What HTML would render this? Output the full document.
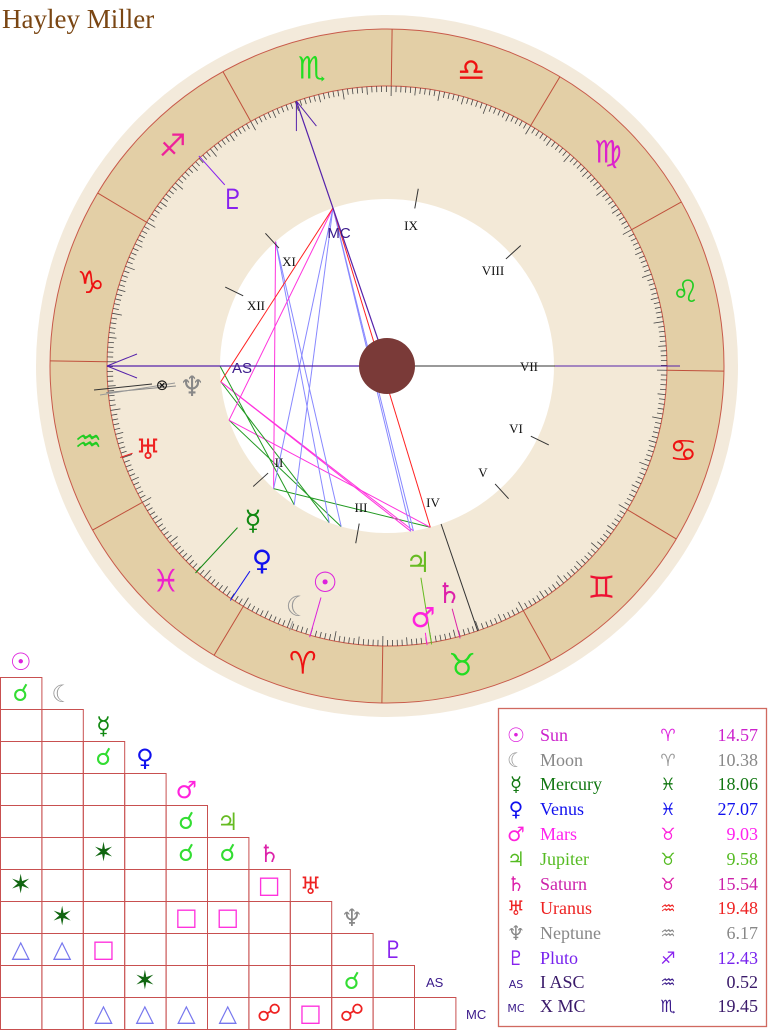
<!DOCTYPE html>
<html><head><meta charset="utf-8"><style>
html,body{margin:0;padding:0;background:#fff;width:774px;height:1032px;overflow:hidden}
svg{display:block}
</style></head><body>
<svg id="s" width="774" height="1032" viewBox="0 0 774 1032" xmlns="http://www.w3.org/2000/svg" font-family="DejaVu Sans, sans-serif">
<text x="2" y="28" font-family="Liberation Serif, serif" font-size="27" fill="#7a4613">Hayley Miller</text>
<circle cx="387" cy="366" r="351" fill="#f3eadb"/>
<circle cx="387" cy="366" r="337" fill="#e3cfa6" stroke="#c85a4a" stroke-width="1"/>
<circle cx="387" cy="366" r="280" fill="#f3e9d7" stroke="#c85a4a" stroke-width="1"/>
<circle cx="387" cy="366" r="167" fill="#ffffff"/>
<g id="g"></g>
<circle cx="387" cy="366" r="28" fill="#7a3a38"/>
<g id="top"></g>
<rect x="498.5" y="708.5" width="268" height="318" fill="#fff" stroke="#d06a60" stroke-width="1.3"/>
<g font-family="Liberation Serif, serif" font-size="18">
<g font-family="DejaVu Sans, sans-serif" font-size="20" text-anchor="middle">
<text x="516" y="742" fill="#dd22dd">☉</text><text x="516" y="767" fill="#999">☾</text><text x="516" y="791" fill="#117711">☿</text><text x="516" y="816" fill="#1111ee">♀</text><text x="516" y="841" fill="#ff22dd">♂</text><text x="516" y="866" fill="#55bb22">♃</text><text x="516" y="891" fill="#dd22aa">♄</text><text x="516" y="915" fill="#ee2222">♅</text><text x="516" y="940" fill="#888">♆</text><text x="516" y="965" fill="#8822ee">♇</text>
<text x="516" y="988" fill="#3a1a8a" font-size="11">AS</text><text x="516" y="1012" fill="#3a1a8a" font-size="11">MC</text>
<text x="668" y="741" fill="#dd22dd" font-size="17">♈</text><text x="668" y="766" fill="#999" font-size="17">♈</text><text x="668" y="790" fill="#117711" font-size="17">♓</text><text x="668" y="815" fill="#1111ee" font-size="17">♓</text><text x="668" y="840" fill="#ff22dd" font-size="17">♉</text><text x="668" y="865" fill="#55bb22" font-size="17">♉</text><text x="668" y="890" fill="#dd22aa" font-size="17">♉</text><text x="668" y="914" fill="#ee2222" font-size="17">♒</text><text x="668" y="939" fill="#888" font-size="17">♒</text><text x="668" y="964" fill="#8822ee" font-size="17">♐</text><text x="668" y="988" fill="#3a1a8a" font-size="17">♒</text><text x="668" y="1012" fill="#3a1a8a" font-size="17">♏</text>
</g>
<text x="540" y="741" fill="#cc22cc">Sun</text><text x="540" y="766" fill="#888">Moon</text><text x="540" y="790" fill="#117711">Mercury</text><text x="540" y="815" fill="#1111ee">Venus</text><text x="540" y="840" fill="#ff22ee">Mars</text><text x="540" y="865" fill="#55bb22">Jupiter</text><text x="540" y="890" fill="#cc22aa">Saturn</text><text x="540" y="914" fill="#ee2222">Uranus</text><text x="540" y="939" fill="#888">Neptune</text><text x="540" y="964" fill="#7722ee">Pluto</text><text x="540" y="988" fill="#3a1a6a">I ASC</text><text x="540" y="1012" fill="#3a1a6a">X MC</text>
<g text-anchor="end">
<text x="758" y="741" fill="#cc22cc">14.57</text><text x="758" y="766" fill="#888">10.38</text><text x="758" y="790" fill="#117711">18.06</text><text x="758" y="815" fill="#1111ee">27.07</text><text x="758" y="840" fill="#ff22ee">9.03</text><text x="758" y="865" fill="#55bb22">9.58</text><text x="758" y="890" fill="#cc22aa">15.54</text><text x="758" y="914" fill="#ee2222">19.48</text><text x="758" y="939" fill="#888">6.17</text><text x="758" y="964" fill="#7722ee">12.43</text><text x="758" y="988" fill="#3a1a6a">0.52</text><text x="758" y="1012" fill="#3a1a6a">19.45</text>
</g></g>
<g id="grid"></g>
</svg>
<script>
var NS="http://www.w3.org/2000/svg",cx=387,cy=366,A=300.87;
function el(p,t,a,txt){var e=document.createElementNS(NS,t);for(var k in a)e.setAttribute(k,a[k]);if(txt!=null)e.textContent=txt;p.appendChild(e);return e;}
function pt(l,r){var th=(180+(l-A))*Math.PI/180;return [cx+r*Math.cos(th),cy-r*Math.sin(th)];}
function pa(th,r){th=th*Math.PI/180;return [cx+r*Math.cos(th),cy-r*Math.sin(th)];}
var g=document.getElementById('g'),top_=document.getElementById('top');
function line(p,a,b,c,w){el(p,'line',{x1:a[0],y1:a[1],x2:b[0],y2:b[1],stroke:c,'stroke-width':w||1});}
for(var d=0;d<360;d++){var L=d%10==0?10:(d%5==0?8:6);line(g,pt(d,280),pt(d,280-L),'#444',0.8);}
for(var k=0;k<12;k++)line(g,pt(30*k,280),pt(30*k,337),'#c0503c',1);
var sg="♈♉♊♋♌♍♎♏♐♑♒♓",sc=['#ee1111','#22dd22','#ee1133','#ee1111','#22cc22','#dd22cc','#ee1111','#22dd22','#ee2299','#ee1111','#22cc22','#ee22cc'];
for(k=0;k<12;k++){var p=pt(30*k+15,308);el(g,'text',{x:p[0],y:p[1]+11,'text-anchor':'middle','font-size':31,fill:sc[k]},sg[k]);}
var lon=[14.95,10.63,348.1,357.12,39.05,39.97,45.9,319.8,306.28,252.72,300.87,229.75];
var pc=['#dd22dd','#999999','#118811','#1111ee','#ff22dd','#66bb22','#dd22aa','#ee2222','#888888','#8822ee','#3a1a8a','#3a1a8a'];
var gl=['☉','☾','☿','♀','♂','♃','♄','♅','♆','♇'];
var pos=[[325,582],[298,606],[253,520],[262,560],[423,617],[418,562],[449,593],[148,449],[192,386],[233,199]];
for(var i=0;i<10;i++){var a=pt(lon[i],282),dx=pos[i][0]-cx,dy=pos[i][1]-cy,r=Math.sqrt(dx*dx+dy*dy);
line(g,a,pt(lon[i],r+16),pc[i],1);el(top_,'text',{x:pos[i][0],y:pos[i][1]+10,'text-anchor':'middle','font-size':28,fill:pc[i]},gl[i]);}
var asp=[[6,2,'#229922'],[7,0,'#229922'],[7,6,'#ff33dd'],[8,1,'#229922'],[8,4,'#ff33dd'],[8,5,'#ff33dd'],[9,0,'#8888ff'],[9,1,'#8888ff'],[9,2,'#ff33dd'],[10,3,'#229922'],[11,2,'#8888ff'],[11,3,'#8888ff'],[11,4,'#8888ff'],[11,5,'#8888ff'],[11,6,'#ff2222'],[11,7,'#ff33dd'],[11,8,'#ff2222']];
asp.forEach(function(q){line(g,pt(lon[q[0]],167),pt(lon[q[1]],167),q[2],1);});
line(g,[cx,cy],pt(A,280),'#5522aa',1.2);
var as=pt(A,280);line(g,as,[as[0]+30,as[1]-12],'#5522aa',1);line(g,as,[as[0]+30,as[1]+12],'#5522aa',1);
line(g,[cx,cy],pt(229.75,280),'#5522aa',1.2);var mc=pt(229.75,280);
line(g,mc,[mc[0],mc[1]+30],'#5522aa',1);line(g,mc,[mc[0]+20,mc[1]+25],'#5522aa',1);
line(g,[cx,cy],[680,366],'#5522aa',1);line(g,[380,366],[555,366],'#333',1);
line(g,pa(288.9,167),pa(288.9,280),'#333',1);
var hs=[[80,'IX',411,230],[42,'VIII',493,275],[132.5,'XI',289,266],[154,'XII',256,310],[222,'II',279,467],[260,'III',361,512],[312.5,'V',483,477],[334,'VI',516,433]];
hs.forEach(function(h){line(g,pa(h[0],160),pa(h[0],180),'#333',1);el(top_,'text',{x:h[2],y:h[3],'text-anchor':'middle','font-size':13,'font-family':'Liberation Serif, serif',fill:'#111'},h[1]);});
el(top_,'text',{x:433,y:507,'text-anchor':'middle','font-size':13,'font-family':'Liberation Serif, serif',fill:'#111'},'IV');
el(top_,'text',{x:529,y:371,'text-anchor':'middle','font-size':13,'font-family':'Liberation Serif, serif',fill:'#111'},'VII');
el(top_,'text',{x:242,y:373,'text-anchor':'middle','font-size':15,'font-family':'Liberation Sans, sans-serif',fill:'#3a1a8a'},'AS');
el(top_,'text',{x:339,y:238,'text-anchor':'middle','font-size':15,'font-family':'Liberation Sans, sans-serif',fill:'#3a1a8a'},'MC');
line(g,[94,390],[152,384],'#333',1);line(g,[100,395],[175,383],'#999',1);
el(top_,'text',{x:162,y:390,'text-anchor':'middle','font-size':15,fill:'#111'},'⊗');
var G=document.getElementById('grid'),cw=41.4,ch=32,y0=677;
var ag={c:['☌','#33dd33'],s:['✶','#116611'],q:['□','#ff33dd'],t:['△','#7777ee'],o:['☍','#ee2222']};
var rows=[['c'],[],[,,'c'],[],[,,,,'c'],[,,'s',,'c','c'],['s',,,,,,'q'],[,'s',,,'q','q'],['t','t','q'],[,,,'s',,,,,'c'],[,,'t','t','t','t','o','q','o']];
for(var r=0;r<11;r++){for(var c=0;c<=r;c++){var x=c*cw,y=y0+r*ch;
el(G,'rect',{x:x+0.5,y:y+0.5,width:cw,height:ch,fill:'none',stroke:'#c85050','stroke-width':1});
var s=rows[r][c];if(s)el(G,'text',{x:x+cw/2,y:y+24,'text-anchor':'middle','font-size':s=='s'?26:24,fill:ag[s][1]},ag[s][0]);}}
var hg=['☉','☾','☿','♀','♂','♃','♄','♅','♆','♇'];
for(var c=0;c<12;c++){var x=c*cw+cw/2,y=y0+(c-1)*ch+25;
if(c<10)el(G,'text',{x:x,y:y,'text-anchor':'middle','font-size':24,fill:pc[c]},hg[c]);
else el(G,'text',{x:x,y:y-3,'text-anchor':'middle','font-size':13,'font-family':'Liberation Sans, sans-serif',fill:'#3a1a8a'},c==10?'AS':'MC');}
</script>
</body></html>
